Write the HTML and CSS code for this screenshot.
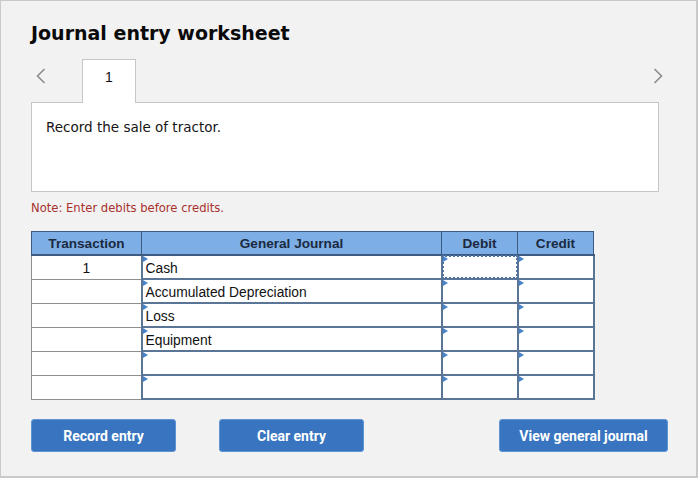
FILE: index.html
```html
<!DOCTYPE html>
<html>
<head>
<meta charset="utf-8">
<link rel="stylesheet" href="styles.css">
</head>
<body>
<div class="page">
  <h1 class="title">Journal entry worksheet</h1>
  <div class="tabs">
    <svg class="chev" width="10" height="16" viewBox="0 0 10 16"><path d="M8.5 1 L1.5 8 L8.5 15" fill="none" stroke="#8c8c8c" stroke-width="1.6"/></svg>
    <div class="tab">1</div>
    <svg class="chev chev-right" width="10" height="16" viewBox="0 0 10 16"><path d="M1.5 1 L8.5 8 L1.5 15" fill="none" stroke="#8c8c8c" stroke-width="1.6"/></svg>
  </div>
  <div class="desc">Record the sale of tractor.</div>
  <p class="note">Note: Enter debits before credits.</p>
  <table class="journal">
    <colgroup>
      <col class="c-tr"><col class="c-gj"><col class="c-amt"><col class="c-amt">
    </colgroup>
    <thead>
      <tr><th>Transaction</th><th>General Journal</th><th>Debit</th><th>Credit</th></tr>
    </thead>
    <tbody>
      <tr><td class="tr">1</td><td class="in">Cash</td><td class="in focus"></td><td class="in"></td></tr>
      <tr><td class="tr"></td><td class="in">Accumulated Depreciation</td><td class="in"></td><td class="in"></td></tr>
      <tr><td class="tr"></td><td class="in">Loss</td><td class="in"></td><td class="in"></td></tr>
      <tr><td class="tr"></td><td class="in">Equipment</td><td class="in"></td><td class="in"></td></tr>
      <tr><td class="tr"></td><td class="in"></td><td class="in"></td><td class="in"></td></tr>
      <tr><td class="tr"></td><td class="in"></td><td class="in"></td><td class="in"></td></tr>
    </tbody>
  </table>
  <div class="actions">
    <button class="btn btn-record">Record entry</button>
    <button class="btn btn-clear">Clear entry</button>
    <button class="btn btn-view">View general journal</button>
  </div>
</div>
</body>
</html>
```
FILE: styles.css
```css
html, body {
  margin: 0;
  padding: 0;
  background: #ffffff;
}
.page {
  box-sizing: border-box;
  width: 698px;
  height: 478px;
  border: 1px solid #c9c9c9;
  border-width: 1px 2px 2px 1px;
  background: #f2f2f2;
  padding: 0 0 0 30px;
  font-family: "DejaVu Sans", Verdana, sans-serif;
  color: #111;
}
.title {
  margin: 0;
  padding-top: 20px;
  font-size: 19px;
  line-height: 24px;
  font-weight: bold;
  color: #0a0a0a;
}
.tabs {
  display: flex;
  align-items: flex-end;
  width: 632px;
  height: 43px;
  margin-top: 15px;
  position: relative;
  z-index: 1;
  margin-bottom: -1px;
}
.chev {
  align-self: flex-start;
  margin-left: 5px;
  margin-top: 8px;
}
.chev-right {
  margin-left: auto;
}
.tab {
  box-sizing: border-box;
  width: 54px;
  height: 44px;
  margin-left: 36px;
  background: #fff;
  border: 1px solid #c6c6c6;
  border-bottom: none;
  text-align: center;
  font-family: "Liberation Sans", Arial, sans-serif;
  font-size: 14px;
  padding-top: 9px;
  color: #111;
}
.desc {
  box-sizing: border-box;
  width: 628px;
  height: 90px;
  background: #fff;
  border: 1px solid #c6c6c6;
  padding: 15px 14px;
  font-size: 13.5px;
  line-height: 18px;
  color: #151515;
}
.note {
  margin: 9px 0 0 0;
  font-size: 11.6px;
  line-height: 15px;
  color: #a8312d;
}
.journal {
  margin-top: 15px;
  border-collapse: collapse;
  table-layout: fixed;
  width: 562px;
  font-family: "Liberation Sans", Arial, sans-serif;
}
.c-tr { width: 110px; }
.c-gj { width: 300px; }
.c-amt { width: 76px; }
.journal th {
  background: #7daee6;
  border: 1px solid #3d5a80;
  border-bottom: 2px solid #3d5a80;
  height: 22px;
  padding: 0;
  font-size: 13.6px;
  font-weight: bold;
  color: #1b2a40;
}
.journal td {
  height: 20px;
  padding: 2px 3px 0;
  background: #fff;
  font-size: 13.8px;
  color: #111;
}
.journal td.tr {
  border: 1px solid #8e8e8e;
  text-align: center;
}
.journal td.in {
  border: 2px solid #5b7597;
  position: relative;
}
.journal td.in::before {
  content: "";
  position: absolute;
  left: 0;
  top: 0;
  border-left: 5px solid #4a84cc;
  border-top: 3px solid transparent;
  border-bottom: 3px solid transparent;
}
.journal td.focus {
  outline: 2px dotted #4d72a3;
  outline-offset: -2px;
}
.actions {
  display: flex;
  margin-top: 19px;
  padding-right: 28px;
}
.btn {
  height: 33px;
  border: 1px solid #5f94d2;
  border-radius: 3px;
  background: #3874bf;
  color: #fff;
  font-family: Roboto, "Liberation Sans", sans-serif;
  font-weight: bold;
  font-size: 14px;
  padding: 0;
}
.btn-record { width: 145px; }
.btn-clear { width: 145px; margin-left: 43px; }
.btn-view { width: 169px; margin-left: auto; }
```
